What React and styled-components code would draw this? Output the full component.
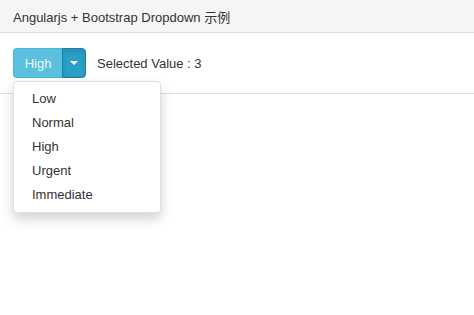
import React from "react";
import styled, { createGlobalStyle } from "styled-components";

const Global = createGlobalStyle`
  html, body { margin: 0; padding: 0; background: #fff; height: 100%; }
  #root { min-height: 100%; }
  body {
    font-family: "Liberation Sans", Arial, "Noto Sans CJK SC", sans-serif;
    font-size: 13px;
    color: #333;
  }
`;

const Page = styled.div`
  min-height: 315px;
`;

const Panel = styled.div`
  border-bottom: 1px solid #ddd;
`;

const Heading = styled.div`
  background: #f5f5f5;
  border-bottom: 1px solid #ddd;
  height: 32px;
  padding: 0 13px;
  display: flex;
  align-items: center;
  font-size: 13px;
  color: #333;
`;

const Body = styled.div`
  padding: 15px 13px;
  display: flex;
  align-items: center;
  gap: 11px;
`;

const Group = styled.div`
  position: relative;
  display: flex;
`;

const MainButton = styled.button`
  font-family: inherit;
  font-size: 13px;
  height: 30px;
  width: 49px;
  border: 1px solid #46b8da;
  border-right: none;
  border-radius: 4px 0 0 4px;
  background: #5bc0de;
  color: rgba(255, 255, 255, 0.9);
  padding: 0;
  display: flex;
  align-items: center;
  justify-content: center;
`;

const CaretButton = styled.button`
  height: 30px;
  width: 24px;
  border: 1px solid #1f7ea0;
  border-radius: 0 4px 4px 0;
  background: #2a9fc7;
  box-shadow: inset 0 3px 5px rgba(0, 0, 0, 0.1);
  padding: 0;
  display: flex;
  align-items: center;
  justify-content: center;
`;

const Caret = styled.span`
  width: 0;
  height: 0;
  border-top: 4px solid #fff;
  border-left: 4px solid transparent;
  border-right: 4px solid transparent;
`;

const Menu = styled.ul`
  position: absolute;
  top: 33px;
  left: 0;
  width: 146px;
  margin: 0;
  padding: 5px 0 5px;
  list-style: none;
  background: #fff;
  border: 1px solid rgba(0, 0, 0, 0.12);
  border-radius: 4px;
  box-shadow: 0 6px 12px rgba(0, 0, 0, 0.175);
  z-index: 10;
`;

const Item = styled.li`
  height: 24px;
  line-height: 24px;
  padding: 0 18px;
  font-size: 13px;
  color: #333;
`;

const Selected = styled.span`
  font-size: 13px;
  color: #333;
`;

const items = ["Low", "Normal", "High", "Urgent", "Immediate"];

export default function App() {
  return (
    <Page>
      <Global />
      <Panel>
        <Heading>Angularjs + Bootstrap Dropdown 示例</Heading>
        <Body>
          <Group>
            <MainButton>High</MainButton>
            <CaretButton>
              <Caret />
            </CaretButton>
            <Menu>
              {items.map((i) => (
                <Item key={i}>{i}</Item>
              ))}
            </Menu>
          </Group>
          <Selected>Selected Value : 3</Selected>
        </Body>
      </Panel>
    </Page>
  );
}
